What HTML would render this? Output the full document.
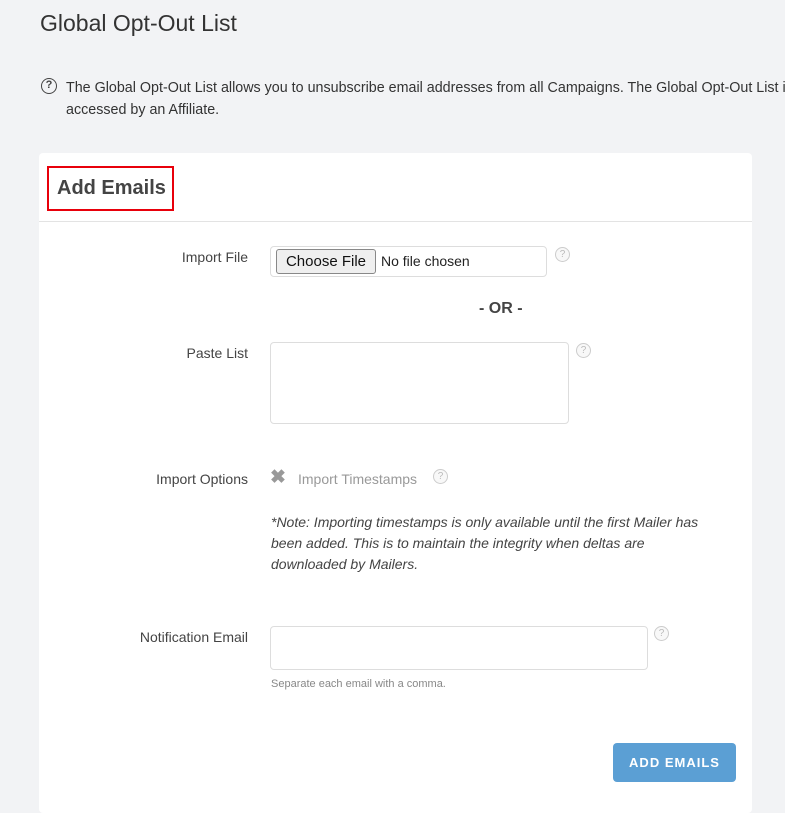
<!DOCTYPE html>
<html><head><style>
*{box-sizing:border-box;margin:0;padding:0}
body{width:785px;height:795px;overflow:hidden;background:#f2f3f5;font-family:"Liberation Sans",sans-serif;color:#3a3a3a;position:relative}
.a{position:absolute}
.q{position:absolute;width:15px;height:15px;border-radius:50%;border:1px solid #ccc;color:#bbb;font-size:10px;text-align:center;line-height:13px;background:#f8f8f8}
.lbl{position:absolute;font-size:14px;color:#444;text-align:right;right:537px}
.inp{position:absolute;border:1px solid #ddd;border-radius:4px;background:#fff}
</style></head><body>
<div class="a" style="left:40px;top:10px;font-size:23px;color:#333">Global Opt-Out List</div>
<div class="a" style="left:41px;top:78px;width:16px;height:16px;border:1.5px solid #444;border-radius:50%;font-size:11px;text-align:center;line-height:13px;font-weight:bold;color:#444">?</div>
<div class="a" style="left:66px;top:77px;font-size:14.3px;line-height:22px;color:#333;white-space:nowrap">The Global Opt-Out List allows you to unsubscribe email addresses from all Campaigns. The Global Opt-Out List is<br>accessed by an Affiliate.</div>
<div class="a" style="left:39px;top:153px;width:713px;height:660px;background:#fff;border-radius:4px">
 <div class="a" style="left:0;top:68px;width:713px;border-top:1px solid #e3e3e3"></div>
 <div class="a" style="left:8px;top:13px;width:127px;height:45px;border:2px solid #e8000b"></div>
 <div class="a" style="left:18px;top:24px;font-size:20px;font-weight:bold;color:#444">Add Emails</div>
</div>
<div class="lbl" style="top:249px">Import File</div>
<div class="inp" style="left:270px;top:246px;width:277px;height:31px"></div>
<div class="a" style="left:276px;top:249px;width:100px;height:25px;border:1px solid #888;border-radius:3px;background:#efefef;font-size:15px;text-align:center;line-height:23px;color:#111">Choose File</div>
<div class="a" style="left:381px;top:253px;font-size:14px;color:#222">No file chosen</div>
<div class="q" style="left:555px;top:247px">?</div>
<div class="a" style="left:479px;top:300px;font-size:16px;font-weight:bold;color:#444">- OR -</div>
<div class="lbl" style="top:345px">Paste List</div>
<div class="inp" style="left:270px;top:342px;width:299px;height:82px"></div>
<div class="q" style="left:576px;top:343px">?</div>
<div class="lbl" style="top:471px">Import Options</div>
<div class="a" style="left:270px;top:466px;font-size:19px;color:#999;font-weight:bold">✖</div>
<div class="a" style="left:298px;top:471px;font-size:14px;color:#999">Import Timestamps</div>
<div class="q" style="left:433px;top:469px">?</div>
<div class="a" style="left:271px;top:512px;font-size:14px;line-height:21px;font-style:italic;color:#444;width:440px">*Note: Importing timestamps is only available until the first Mailer has been added. This is to maintain the integrity when deltas are downloaded by Mailers.</div>
<div class="lbl" style="top:629px">Notification Email</div>
<div class="inp" style="left:270px;top:626px;width:378px;height:44px"></div>
<div class="q" style="left:654px;top:626px">?</div>
<div class="a" style="left:271px;top:678px;font-size:11px;color:#888">Separate each email with a comma.</div>
<div class="a" style="left:613px;top:743px;width:123px;height:39px;background:#5b9fd4;border-radius:4px;color:#fff;font-size:13px;font-weight:bold;letter-spacing:1px;text-align:center;line-height:39px">ADD EMAILS</div>
</body></html>
